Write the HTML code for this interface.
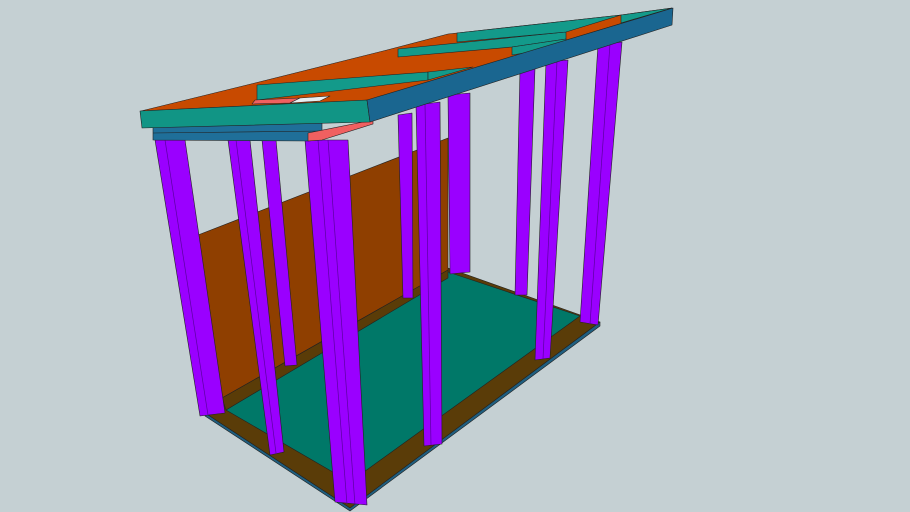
<!DOCTYPE html>
<html><head><style>html,body{margin:0;padding:0;background:#c5d0d3;}svg{display:block}</style></head>
<body>
<svg width="910" height="512" viewBox="0 0 910 512" xmlns="http://www.w3.org/2000/svg" stroke="#222" stroke-width="0.6" stroke-linejoin="round">
<rect width="910" height="512" fill="#c5d0d3" stroke="none"/>
<!-- floor base -->
<polygon points="205,413 350,508 600,322 448,268" fill="#5a3c08"/>
<polygon points="205,416 350,511 600,326 600,322 350,508 205,413" fill="#1f5f80"/>
<polygon points="226,410 350,482 580,316 448,272" fill="#007868"/>
<!-- back wall -->
<polygon points="198,235 448,138 448,270 222,398 205,405" fill="#8f3f00"/>
<polygon points="222,398 448,270 448,278 226,410" fill="#5a3c08"/>
<!-- back studs -->
<g fill="#9a00ff">
<polygon points="398,115 412,113 413,298 403,298"/>
<polygon points="448,95 470,93 470,272 450,274"/>
<polygon points="520,70 535,68 527,295 515,295"/>
<polygon points="262,140 276,140 297,365 285,366"/>
</g>
<!-- front studs -->
<g fill="#9a00ff">
<polygon points="155,140 185,140 225,413 200,416"/>
<polygon points="228,140 250,140 284,452 270,455"/>
<polygon points="416,105 440,102 442,444 424,446"/>
<polygon points="546,62 568,60 550,358 535,360"/>
<polygon points="598,45 622,42 598,325 580,322"/>
<polygon points="305,140 348,140 367,505 335,502"/>
</g>
<g fill="none" stroke="#5a00a0" stroke-width="0.7">
<line x1="165" y1="140" x2="208" y2="415"/>
<line x1="236" y1="140" x2="276" y2="453"/>
<line x1="425" y1="104" x2="431" y2="445"/>
<line x1="557" y1="61" x2="543" y2="359"/>
<line x1="610" y1="44" x2="590" y2="324"/>
<line x1="318" y1="140" x2="347" y2="504"/>
<line x1="328" y1="140" x2="355" y2="505"/>
</g>
<!-- plates under roof -->
<polygon points="153,127 322,123 322,140 308,141 153,140" fill="#1f6f99"/>
<line x1="153" y1="133" x2="322" y2="131"/>
<polygon points="308,133 373,120 373,124 322,140 308,141" fill="#f06060"/>
<!-- roof top -->
<polygon points="141,111 255,83 323,66 387,50 448,34 621,15 672,8 370,100" fill="#c84a00"/>
<g fill="#139a8a">
<polygon points="257,85 428,72 428,80 257,100"/>
<polygon points="428,72 473,67 428,80"/>
<polygon points="398,49 566,32 566,39 512,47 398,57"/>
<polygon points="457,33 621,15 566,32 457,42"/>
<polygon points="621,15 672,8 621,23"/>
<polygon points="512,47 566,39 566,46 512,55"/>
</g>
<polygon points="255,100 300,98 290,103 252,104" fill="#f06060"/>
<polygon points="300,98 330,96 320,101 290,103" fill="#e8eef0"/>
<!-- front green beam -->
<polygon points="140,111 367,100 370,122 142,128" fill="#119585"/>
<!-- fascia -->
<polygon points="367,100 673,8 672,25 370,122" fill="#1a6690"/>
</svg>
</body></html>
